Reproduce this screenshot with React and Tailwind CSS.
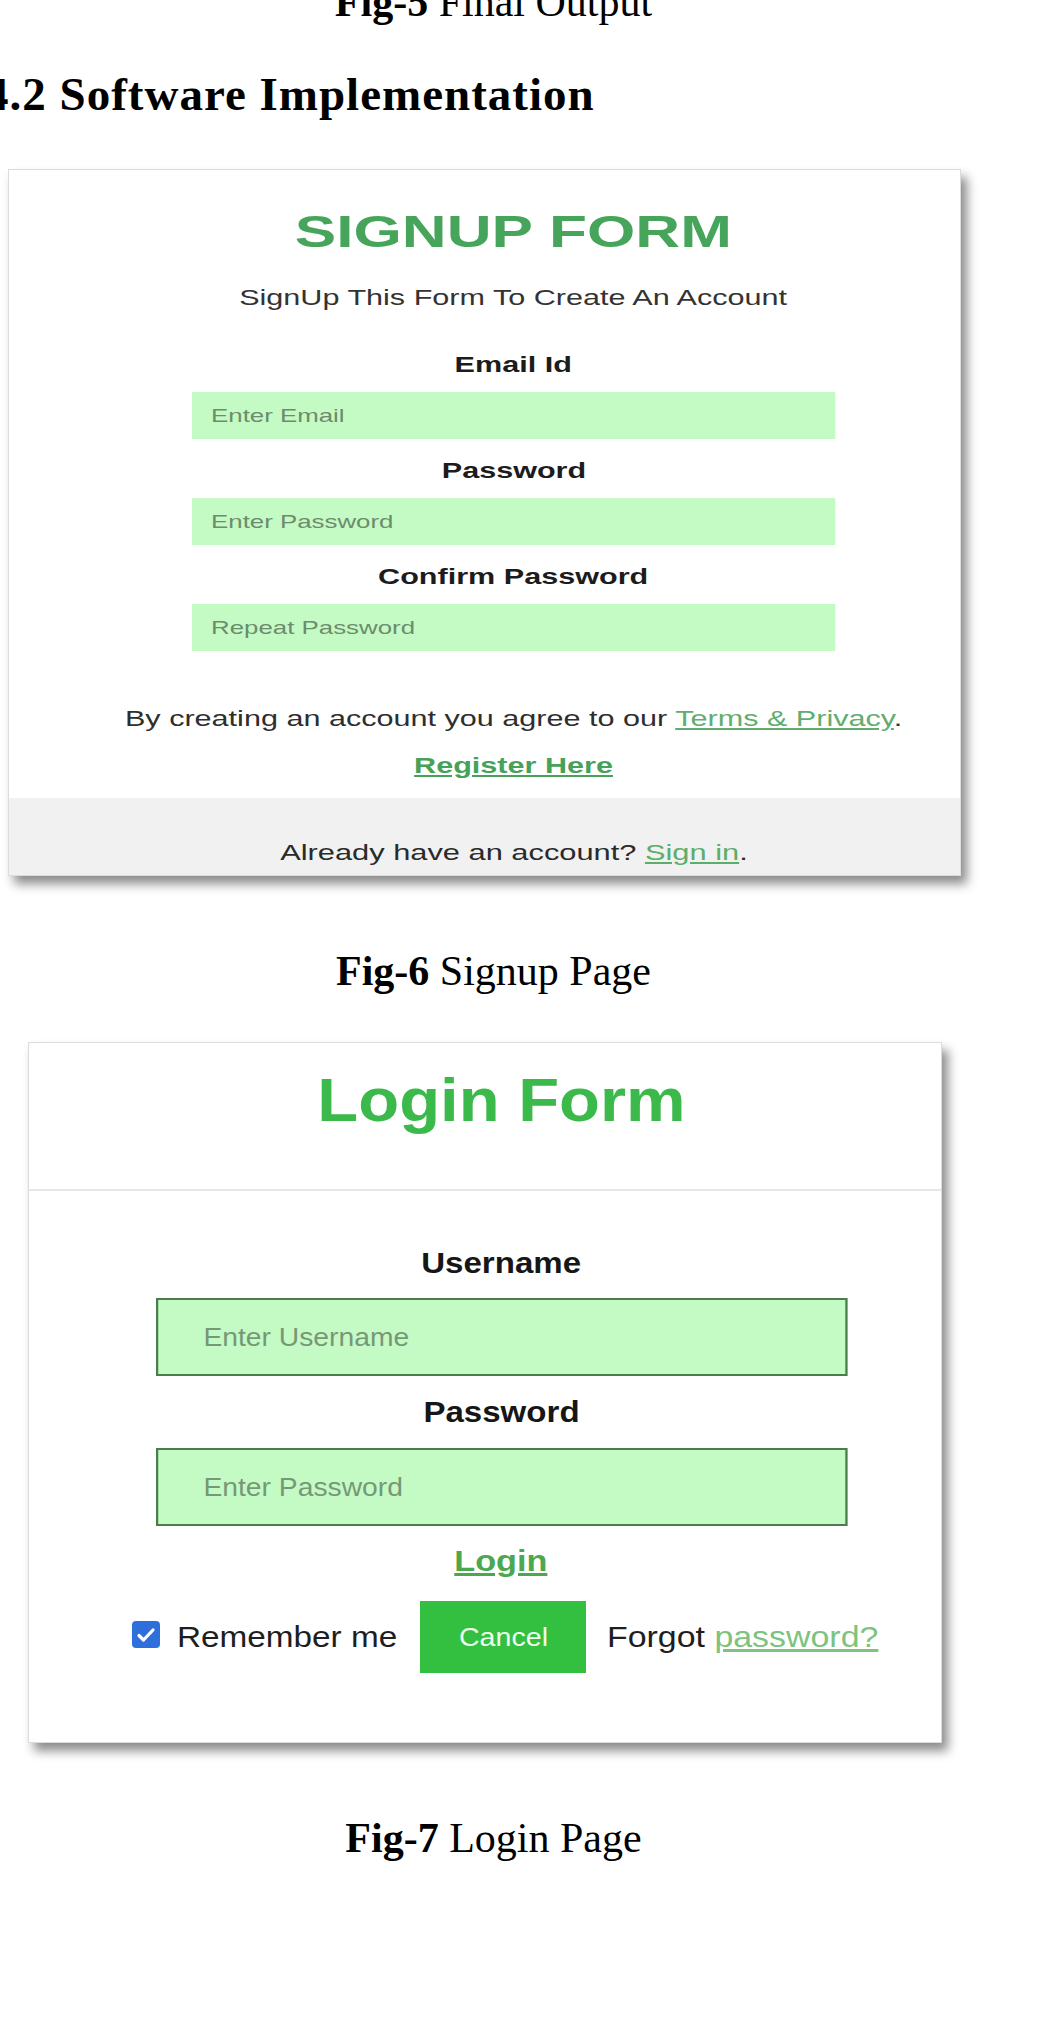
const serif = "font-['Liberation_Serif','Times_New_Roman',serif]";

function SLabel({ children, className = "" }) {
  return (
    <div className={"text-[22px] leading-[24px] font-bold text-[#1c1c1c] " + className}>
      <span className="inline-block scale-x-[1.39] whitespace-nowrap">{children}</span>
    </div>
  );
}

function SInput({ placeholder, type = "text", className = "" }) {
  return (
    <div className={"mx-auto w-[643px] h-[47px] " + className}>
      <input
        type={type}
        placeholder={placeholder}
        className="block w-[473px] h-[47px] origin-left scale-x-[1.36] bg-[#c4fbc4] pl-[14px] text-[19px] text-[#333] placeholder:text-[#6c8c6d] outline-none border-0"
      />
    </div>
  );
}

function LLabel({ children, className = "" }) {
  return (
    <div className={"text-center text-[29px] leading-[32px] font-bold text-[#161616] " + className}>
      <span className="inline-block scale-x-[1.14] whitespace-nowrap">{children}</span>
    </div>
  );
}

function LInput({ placeholder, type = "text", className = "" }) {
  return (
    <div className={"mx-auto w-[691px] h-[78px] " + className}>
      <input
        type={type}
        placeholder={placeholder}
        className="block w-[612px] h-[78px] origin-left scale-x-[1.13] border-2 border-[#4a7d4c] bg-[#c4fbc4] pl-[40px] text-[25px] text-[#333] placeholder:text-[#779877] outline-none"
      />
    </div>
  );
}

export default function App() {
  return (
    <div className="w-[1057px] min-h-[2041px] bg-white overflow-hidden font-['Liberation_Sans',Arial,sans-serif]">
      {/* previous caption */}
      <div className={"w-[987px] -mt-[19px] text-center text-[42px] leading-[42px] text-black whitespace-nowrap " + serif}>
        <span className="font-bold">Fig-5</span> Final Output
      </div>

      {/* section heading */}
      <h2 className={"mt-[48px] -ml-[15px] text-[47px] leading-[47px] font-bold tracking-[1px] text-black whitespace-nowrap " + serif}>
        4.2 Software Implementation
      </h2>

      {/* Signup card */}
      <div className="mt-[51px] ml-[8px] w-[953px] border border-[#dcdcdc] bg-white shadow-[6px_8px_10px_rgba(0,0,0,0.45)]">
        <div className="pl-[58px] pt-[40px] text-center">
          <h1 className="text-[45px] leading-[44px] font-bold text-[#47a55b]">
            <span className="inline-block scale-x-[1.38] whitespace-nowrap">SIGNUP FORM</span>
          </h1>
          <p className="mt-[32px] text-[22px] leading-[24px] text-[#333]">
            <span className="inline-block scale-x-[1.39] whitespace-nowrap">SignUp This Form To Create An Account</span>
          </p>

          <SLabel className="mt-[43px]">Email Id</SLabel>
          <SInput className="mt-[15px]" placeholder="Enter Email" />
          <SLabel className="mt-[20px]">Password</SLabel>
          <SInput className="mt-[15px]" type="password" placeholder="Enter Password" />
          <SLabel className="mt-[20px]">Confirm Password</SLabel>
          <SInput className="mt-[15px]" type="password" placeholder="Repeat Password" />

          <p className="mt-[56px] text-[22px] leading-[24px] text-[#2e2e2e]">
            <span className="inline-block scale-x-[1.39] whitespace-nowrap">
              By creating an account you agree to our{" "}
              <a href="#" className="text-[#62ad6e] underline">Terms &amp; Privacy</a>.
            </span>
          </p>
          <div className="mt-[23px] text-[22px] leading-[24px] font-bold">
            <a href="#" className="inline-block scale-x-[1.39] whitespace-nowrap text-[#47a259] underline">Register Here</a>
          </div>
        </div>
        <div className="mt-[20px] h-[77px] bg-[#f1f1f1] pl-[58px] pt-[43px] text-center text-[22px] leading-[24px] text-[#2a2a2a]">
          <span className="inline-block scale-x-[1.4] whitespace-nowrap">
            Already have an account? <a href="#" className="text-[#5cae6a] underline">Sign in</a>.
          </span>
        </div>
      </div>

      <div className={"w-[987px] mt-[74px] text-center text-[42px] leading-[42px] text-black whitespace-nowrap " + serif}>
        <span className="font-bold">Fig-6</span> Signup Page
      </div>

      {/* Login card */}
      <div className="mt-[50px] ml-[28px] w-[914px] border border-[#dcdcdc] bg-white shadow-[6px_8px_10px_rgba(0,0,0,0.45)]">
        <div className="border-b-2 border-[#e6e6e6] pl-[32px] pt-[26px] pb-[58px] text-center">
          <h1 className="text-[62px] leading-[62px] font-bold text-[#3cb94b]">
            <span className="inline-block scale-x-[1.08] whitespace-nowrap">Login Form</span>
          </h1>
        </div>
        <div className="pl-[32px] pb-[69px]">
          <LLabel className="mt-[56px]">Username</LLabel>
          <LInput className="mt-[19px]" placeholder="Enter Username" />
          <LLabel className="mt-[20px]">Password</LLabel>
          <LInput className="mt-[20px]" type="password" placeholder="Enter Password" />
          <div className="mt-[18px] text-center text-[30px] leading-[34px] font-bold">
            <a href="#" className="inline-block scale-x-[1.14] whitespace-nowrap text-[#4aa84f] underline">Login</a>
          </div>
          <div className="mt-[23px] ml-[71px] flex h-[72px] items-center">
            <span className="mb-[5px] flex h-[27px] w-[28px] items-center justify-center rounded-[4px] bg-[#2f6fdc]">
              <svg width="20" height="18" viewBox="0 0 20 18" fill="none">
                <path d="M3 9.5l4.5 4.5L17 4" stroke="white" strokeWidth="3.2" strokeLinecap="round" strokeLinejoin="round" />
              </svg>
            </span>
            <span className="ml-[17px] w-[221px] text-[30px] leading-[34px] text-[#1e1e1e]">
              <span className="inline-block origin-left scale-x-[1.11] whitespace-nowrap">Remember me</span>
            </span>
            <button type="button" className="ml-[22px] flex h-[72px] w-[166px] items-center justify-center bg-[#33c040] text-[26px] leading-[30px] text-[#eefcee]">
              <span className="inline-block scale-x-[1.1]">Cancel</span>
            </button>
            <span className="ml-[21px] w-[273px] text-[30px] leading-[34px] text-[#1e1e1e]">
              <span className="inline-block origin-left scale-x-[1.13] whitespace-nowrap">
                Forgot <a href="#" className="text-[#7dc27f] underline">password?</a>
              </span>
            </span>
          </div>
        </div>
      </div>

      <div className={"w-[987px] mt-[74px] text-center text-[42px] leading-[42px] text-black whitespace-nowrap " + serif}>
        <span className="font-bold">Fig-7</span> Login Page
      </div>
    </div>
  );
}
